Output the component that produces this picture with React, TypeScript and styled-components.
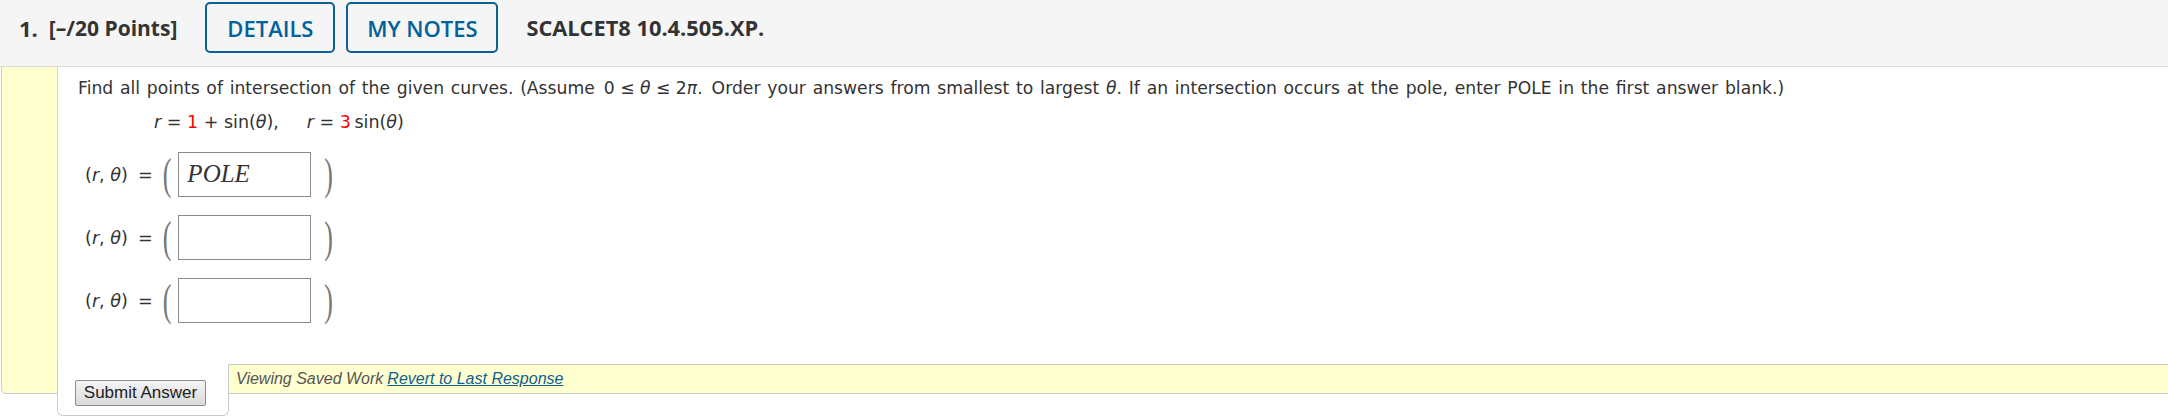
import * as React from "react";
import styled, { createGlobalStyle } from "styled-components";

const GlobalStyle = createGlobalStyle`
  html, body {
    margin: 0;
    padding: 0;
    background: #fff;
  }
  body {
    font-family: "DejaVu Sans", Verdana, sans-serif;
    color: #333;
  }
`;

const Header = styled.header`
  display: flex;
  align-items: center;
  height: 51px;
  padding: 2px 0 13px 19px;
  background: #f5f5f5;
  border-bottom: 1px solid #dcdcdc;
  font-family: "Open Sans", sans-serif;
  font-size: 22px;
  font-weight: 700;
  color: #333;
`;

const QNumber = styled.span`
  margin-right: 11px;
`;

const Points = styled.span`
  font-size: 21px;
`;

const ButtonGroup = styled.div`
  display: flex;
  gap: 11px;
  margin: 0 28px;
`;

const HeaderButton = styled.button<{ $width: number }>`
  box-sizing: border-box;
  width: ${(p) => p.$width}px;
  height: 51px;
  padding: 0;
  border: 2px solid #0b6096;
  border-radius: 5px;
  background: transparent;
  color: #00629b;
  font-family: "Open Sans", sans-serif;
  font-size: 22px;
  font-weight: 600;
`;

const Title = styled.span`
  font-size: 21.8px;
`;

const Card = styled.section`
  display: grid;
  grid-template-columns: 56px 172px 1fr;
  grid-template-rows: 297px 30px 22px;
  margin-left: 1px;
`;

const Strip = styled.div`
  grid-column: 1;
  grid-row: 1 / 3;
  box-sizing: border-box;
  background: #ffffd0;
  border-left: 1px solid #ccc;
  border-bottom: 1px solid #c8c8c8;
  border-bottom-left-radius: 5px;
`;

const Content = styled.div`
  grid-column: 2 / 4;
  grid-row: 1;
  box-sizing: border-box;
  padding: 9px 0 0 20px;
  border-left: 1px solid #d6d6d6;
  font-size: 17.2px;
`;

const Question = styled.p`
  margin: 0;
  line-height: 24px;
  word-spacing: 1.3px;
`;

const MathRun = styled.span`
  margin: 0 9px;
  word-spacing: 0;
`;

const Var = styled.i`
  font-style: italic;
`;

const Red = styled.span`
  color: #f00;
`;

const Equation = styled.div`
  margin-top: 10px;
  padding-left: 76px;
  line-height: 24px;
  font-size: 17.5px;
  white-space: pre;
`;

const Rows = styled.div`
  display: flex;
  flex-direction: column;
  gap: 18px;
  margin-top: 18px;
  padding-left: 7px;
`;

const Row = styled.div`
  display: flex;
  align-items: center;
  height: 45px;
`;

const Label = styled.span`
  font-size: 17.6px;
  white-space: pre;
`;

const Equals = styled.span`
  margin: 0 10px;
  font-size: 17.6px;
`;

const Delim = styled.span<{ $side: "open" | "close" }>`
  display: inline-block;
  font-family: "Liberation Serif", serif;
  font-size: 26px;
  line-height: 1;
  color: #777;
  transform: scaleY(1.7);
  margin: ${(p) => (p.$side === "open" ? "0 7px 0 0" : "0 0 0 13px")};
`;

const AnswerBox = styled.input`
  box-sizing: border-box;
  width: 133px;
  height: 45px;
  padding: 0 0 2px 8px;
  border: 1px solid #8a8a8a;
  border-radius: 0;
  background: #fff;
  font-family: "Liberation Serif", serif;
  font-style: italic;
  font-size: 25px;
  color: #333;
  outline: none;
`;

const SubmitTab = styled.div`
  grid-column: 2;
  grid-row: 2 / 4;
  box-sizing: border-box;
  padding: 16px 0 0 17px;
  border: 1px solid #ccc;
  border-top: none;
  border-radius: 0 0 6px 6px;
  background: #fff;
`;

const SubmitButton = styled.button`
  box-sizing: border-box;
  width: 131px;
  height: 26px;
  padding: 0;
  border: 1px solid #8c8c8c;
  border-radius: 2px;
  background: linear-gradient(#f4f4f4, #dadada);
  font-family: "Liberation Sans", Arial, sans-serif;
  font-size: 17px;
  color: #222;
`;

const StatusBar = styled.div`
  grid-column: 3;
  grid-row: 2;
  box-sizing: border-box;
  display: flex;
  align-items: center;
  padding-left: 7px;
  background: #ffffd0;
  border-top: 1px solid #c8c8c8;
  border-bottom: 1px solid #c8c8c8;
  font-family: "Liberation Sans", Arial, sans-serif;
  font-style: italic;
  font-size: 16px;
  color: #555;
`;

const RevertLink = styled.a`
  margin-left: 4px;
  color: #0c5f8f;
  text-decoration: underline;
`;

const answers = ["POLE", "", ""];

export default function App() {
  return (
    <>
      <GlobalStyle />
      <Header>
        <QNumber>1.</QNumber>
        <Points>[–/20 Points]</Points>
        <ButtonGroup>
          <HeaderButton $width={130}>DETAILS</HeaderButton>
          <HeaderButton $width={152}>MY NOTES</HeaderButton>
        </ButtonGroup>
        <Title>SCALCET8 10.4.505.XP.</Title>
      </Header>
      <Card>
        <Strip />
        <Content>
          <Question>
            Find all points of intersection of the given curves. (Assume
            <MathRun>
              0 ≤ <Var>θ</Var> ≤ 2<Var>π</Var>.
            </MathRun>
            Order your answers from smallest to largest <Var>θ</Var>. If an
            intersection occurs at the pole, enter POLE in the first answer
            blank.)
          </Question>
          <Equation>
            <Var>r</Var> = <Red>1</Red> + sin(<Var>θ</Var>),{"     "}
            <Var>r</Var> = <Red>3</Red>
            {"\u2009"}sin(<Var>θ</Var>)
          </Equation>
          <Rows>
            {answers.map((a, i) => (
              <Row key={i}>
                <Label>
                  (<Var>r</Var>, <Var>θ</Var>)
                </Label>
                <Equals>=</Equals>
                <Delim $side="open">(</Delim>
                <AnswerBox defaultValue={a} />
                <Delim $side="close">)</Delim>
              </Row>
            ))}
          </Rows>
        </Content>
        <SubmitTab>
          <SubmitButton>Submit Answer</SubmitButton>
        </SubmitTab>
        <StatusBar>
          Viewing Saved Work
          <RevertLink href="#">Revert to Last Response</RevertLink>
        </StatusBar>
      </Card>
    </>
  );
}
